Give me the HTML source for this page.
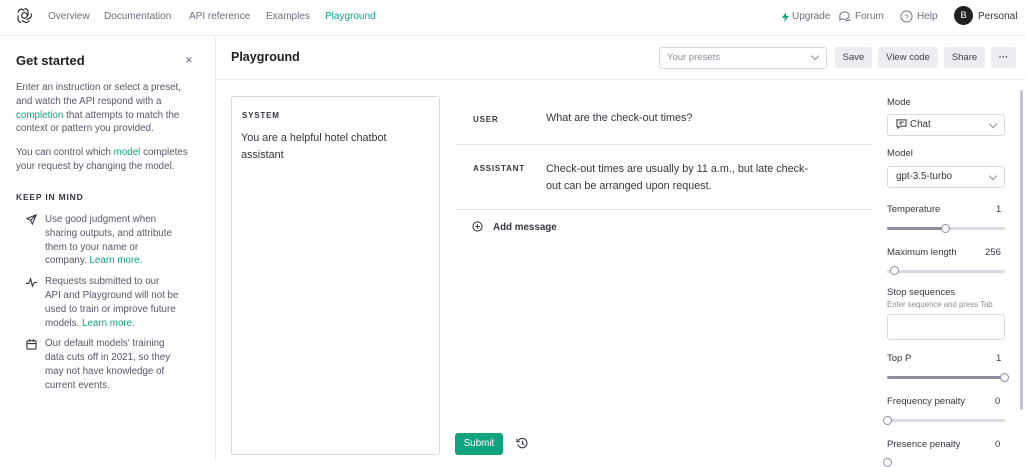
<!DOCTYPE html>
<html><head><meta charset="utf-8"><style>
*{box-sizing:border-box;margin:0;padding:0}
body{width:1025px;height:461px;overflow:hidden;background:#fff;font-family:"Liberation Sans",sans-serif;color:#353740;position:relative}
.a{position:absolute;white-space:nowrap}
.g{color:#10a37f}
.nav{font-size:10px;color:#6e6e80;top:11px}
.side p{font-size:9.8px;line-height:13.8px;color:#565869}
.lbl{font-size:9.5px;color:#353740}
.btn{position:absolute;top:47px;height:21px;background:#ececf1;border-radius:3px;font-size:9.5px;color:#40414f;text-align:center;line-height:21px}
.track{position:absolute;height:3px;background:#d9d9e3;border-radius:2px;left:887px;width:118px}
.fill{position:absolute;height:3px;background:#8e8ea0;border-radius:2px;left:887px}
.knob{position:absolute;width:9px;height:9px;border:1px solid #8e8ea0;border-radius:50%;background:#fff}
.sel{position:absolute;left:887px;width:118px;height:22px;border:1px solid #d9d9e3;border-radius:3px;font-size:9.8px;line-height:20px;padding-left:8px}
.chev{position:absolute;right:8px;top:6px;width:6px;height:6px;border-right:1px solid #8e8ea0;border-bottom:1px solid #8e8ea0;transform:rotate(45deg)}
</style></head><body>
<svg class="a" style="left:16px;top:7px" width="17" height="17" viewBox="0 0 24 24" fill="none" stroke="#202123" stroke-width="1.6"><circle cx="12" cy="12" r="4"/><path d="M12 2a5 5 0 0 1 5 5v5M21 9a5 5 0 0 1-2 7l-4 2M19 19a5 5 0 0 1-7 2l-4-2M7 22a5 5 0 0 1-4-6V12M3 8a5 5 0 0 1 5-5l4 2"/></svg>
<div class="a nav" style="left:48px">Overview</div>
<div class="a nav" style="left:104px">Documentation</div>
<div class="a nav" style="left:189px">API reference</div>
<div class="a nav" style="left:266px">Examples</div>
<div class="a nav" style="left:325px;color:#10a37f">Playground</div>
<svg class="a" style="left:782px;top:12px" width="7" height="10" viewBox="0 0 7 10"><path d="M4 0L0 6h3l-1 4 5-6H4z" fill="#10a37f"/></svg>
<div class="a nav g" style="left:792px">Upgrade</div>
<svg class="a" style="left:838px;top:10px" width="13" height="13" viewBox="0 0 14 14" fill="none" stroke="#6e6e80" stroke-width="1"><path d="M2 6a5 4 0 1 1 2 3.2L2 11z"/><path d="M8 11.5a4 3 0 0 0 4-1l1.5 1"/></svg>
<div class="a nav" style="left:855px">Forum</div>
<svg class="a" style="left:900px;top:10px" width="13" height="13" viewBox="0 0 14 14"><circle cx="7" cy="7" r="6" fill="none" stroke="#6e6e80"/><text x="7" y="10" font-size="8" text-anchor="middle" fill="#6e6e80" font-family="Liberation Sans">?</text></svg>
<div class="a nav" style="left:917px">Help</div>
<div class="a" style="left:954px;top:6px;width:19px;height:19px;border-radius:50%;background:#202123;color:#fff;font-size:9.5px;text-align:center;line-height:19px">B</div>
<div class="a nav" style="left:978px;color:#353740">Personal</div>
<div class="a" style="left:0;top:35px;width:1025px;height:1px;background:#ececf1"></div>
<div class="a" style="left:215px;top:36px;width:1px;height:425px;background:#ececf1"></div>
<div class="a" style="left:16px;top:53px;font-size:13px;font-weight:bold;color:#202123">Get started</div>
<div class="a" style="left:185px;top:52px;font-size:13px;color:#6e6e80">×</div>
<div class="a side" style="left:16px;top:81px;width:195px">
<p>Enter an instruction or select a preset,<br>and watch the API respond with a<br><span class="g">completion</span> that attempts to match the<br>context or pattern you provided.</p>
<p style="margin-top:10px">You can control which <span class="g">model</span> completes<br>your request by changing the model.</p>
</div>
<div class="a" style="left:16px;top:192px;font-size:8.5px;font-weight:bold;letter-spacing:.8px;color:#353740">KEEP IN MIND</div>
<div class="a side" style="left:45px;top:213px">
<p>Use good judgment when<br>sharing outputs, and attribute<br>them to your name or<br>company. <span class="g">Learn more.</span></p>
<p style="margin-top:7px">Requests submitted to our<br>API and Playground will not be<br>used to train or improve future<br>models. <span class="g">Learn more.</span></p>
<p style="margin-top:7px">Our default models' training<br>data cuts off in 2021, so they<br>may not have knowledge of<br>current events.</p>
</div>
<svg class="a" style="left:26px;top:214px" width="11" height="11" viewBox="0 0 12 12" fill="none" stroke="#353740" stroke-width="1.2"><path d="M11 1L1 5l4 2 2 4z M11 1L5 7"/></svg>
<svg class="a" style="left:26px;top:277px" width="11" height="11" viewBox="0 0 12 12" fill="none" stroke="#353740" stroke-width="1.2"><path d="M0 7h3l2-5 2 8 2-4h3"/></svg>
<svg class="a" style="left:26px;top:339px" width="11" height="11" viewBox="0 0 12 12" fill="none" stroke="#353740" stroke-width="1.2"><rect x="1" y="2" width="10" height="9" rx="1"/><path d="M1 5h10M4 0v3M8 0v3"/></svg>
<div class="a" style="left:231px;top:50px;font-size:12.5px;font-weight:bold;color:#202123">Playground</div>
<div class="a" style="left:659px;top:47px;width:168px;height:22px;border:1px solid #d9d9e3;border-radius:3px;font-size:9.5px;color:#8e8ea0;line-height:20px;padding-left:7px">Your presets<span class="chev" style="top:5px"></span></div>
<div class="btn" style="left:835px;width:37px">Save</div>
<div class="btn" style="left:878px;width:60px">View code</div>
<div class="btn" style="left:944px;width:41px">Share</div>
<div class="btn" style="left:991px;width:25px;font-weight:bold">···</div>
<div class="a" style="left:216px;top:79px;width:809px;height:1px;background:#ececf1"></div>
<div class="a" style="left:231px;top:96px;width:209px;height:359px;border:1px solid #d9d9e3;border-radius:3px"></div>
<div class="a" style="left:242px;top:111px;font-size:8px;font-weight:bold;letter-spacing:.8px">SYSTEM</div>
<div class="a" style="left:241px;top:130px;font-size:10.8px;line-height:16.5px">You are a helpful hotel chatbot<br>assistant</div>
<div class="a" style="left:473px;top:115px;font-size:8px;font-weight:bold;letter-spacing:.8px">USER</div>
<div class="a" style="left:546px;top:112px;font-size:10.8px">What are the check-out times?</div>
<div class="a" style="left:456px;top:144px;width:416px;height:1px;background:#e5e5ea"></div>
<div class="a" style="left:473px;top:164px;font-size:8px;font-weight:bold;letter-spacing:.8px">ASSISTANT</div>
<div class="a" style="left:546px;top:161px;font-size:10.8px;line-height:16.5px">Check-out times are usually by 11 a.m., but late check-<br>out can be arranged upon request.</div>
<div class="a" style="left:456px;top:209px;width:416px;height:1px;background:#e5e5ea"></div>
<svg class="a" style="left:472px;top:221px" width="11" height="11" viewBox="0 0 12 12" fill="none" stroke="#353740" stroke-width="1.1"><circle cx="6" cy="6" r="5"/><path d="M6 3.5v5M3.5 6h5"/></svg>
<div class="a" style="left:493px;top:222px;font-size:9.8px;font-weight:bold">Add message</div>
<div class="a" style="left:455px;top:433px;width:48px;height:22px;background:#10a37f;border-radius:3px;color:#fff;font-size:9.8px;text-align:center;line-height:22px">Submit</div>
<svg class="a" style="left:516px;top:437px" width="13" height="13" viewBox="0 0 14 14" fill="none" stroke="#353740" stroke-width="1.2"><path d="M2.5 4A5 5 0 1 1 2 8"/><path d="M1 2v3h3"/><path d="M7 4v3l2 1.5"/></svg>
<div class="a" style="left:1020px;top:90px;width:3px;height:320px;background:#c5c5d2;border-radius:2px"></div>
<div class="a lbl" style="left:887px;top:97px">Mode</div>
<div class="sel" style="top:114px"><svg style="vertical-align:-2px;margin-right:3px" width="11" height="10" viewBox="0 0 12 11" fill="none" stroke="#353740" stroke-width="1.1"><path d="M1 1h10v7H5l-3 2V8H1z M3.5 3.5h5M3.5 5.5h3"/></svg>Chat<span class="chev"></span></div>
<div class="a lbl" style="left:887px;top:148px">Model</div>
<div class="sel" style="top:166px">gpt-3.5-turbo<span class="chev"></span></div>
<div class="a lbl" style="left:887px;top:204px">Temperature</div><div class="a lbl" style="left:996px;top:204px">1</div>
<div class="track" style="top:227px"></div><div class="fill" style="top:227px;width:58px"></div><div class="knob" style="left:941px;top:224px"></div>
<div class="a lbl" style="left:887px;top:247px">Maximum length</div><div class="a lbl" style="left:985px;top:247px">256</div>
<div class="track" style="top:270px"></div><div class="knob" style="left:890px;top:266px"></div>
<div class="a lbl" style="left:887px;top:287px">Stop sequences</div>
<div class="a" style="left:887px;top:300px;font-size:7.8px;color:#8e8ea0">Enter sequence and press Tab</div>
<div class="a" style="left:887px;top:314px;width:118px;height:26px;border:1px solid #d9d9e3;border-radius:3px"></div>
<div class="a lbl" style="left:887px;top:353px">Top P</div><div class="a lbl" style="left:996px;top:353px">1</div>
<div class="fill" style="top:376px;width:118px"></div><div class="knob" style="left:1000px;top:373px"></div>
<div class="a lbl" style="left:887px;top:396px">Frequency penalty</div><div class="a lbl" style="left:995px;top:396px">0</div>
<div class="track" style="top:419px"></div><div class="knob" style="left:883px;top:416px"></div>
<div class="a lbl" style="left:887px;top:439px">Presence penalty</div><div class="a lbl" style="left:995px;top:439px">0</div>
<div class="knob" style="left:883px;top:458px"></div>
</body></html>
